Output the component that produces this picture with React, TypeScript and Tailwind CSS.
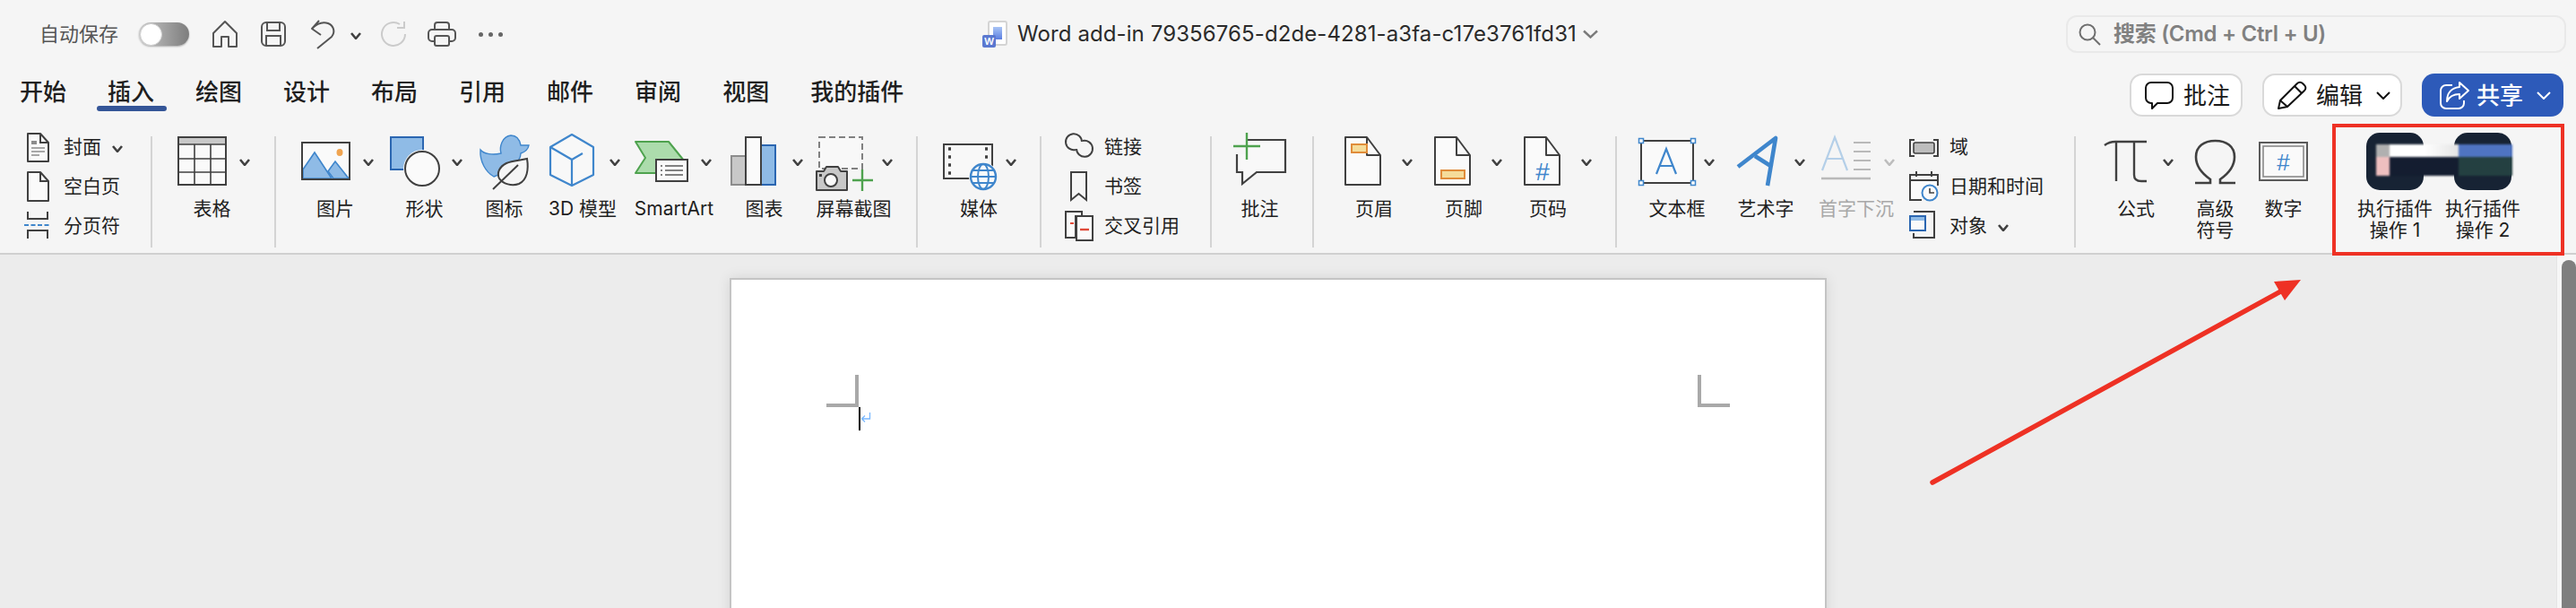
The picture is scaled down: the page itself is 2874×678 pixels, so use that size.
import React from 'react';

const INK = '#404040';
const BLUE = '#2b66b1';
const SKY = '#8fbbe6';
const MID = '#3f86cc';

type SvgProps = { w: number; h: number; children: React.ReactNode };

const Svg = ({ w, h, children }: SvgProps) => (
  <svg width={w} height={h} viewBox={`0 0 ${w} ${h}`} fill="none" className="shrink-0 overflow-visible">
    {children}
  </svg>
);

const Chevron = ({ color = '#404040' }: { color?: string }) => (
  <svg width="12" height="8" viewBox="0 0 12 8" fill="none" className="shrink-0 mt-[3px]">
    <path d="M1 1l5 6 5-6" stroke={color} strokeWidth="2.6" strokeLinejoin="round" />
  </svg>
);

/* ---------- big ribbon icons, 55px tall box starting at y=152 ---------- */
const TableIcon = () => (
  <Svg w={55} h={55}>
    <rect x="1" y="1" width="53" height="53" fill="#fafafa" />
    <rect x="1" y="1" width="53" height="8" fill="#c8c8c8" />
    <path d="M1 9h53M1 25h53M1 40h53M19 9v45M37 9v45" stroke={INK} strokeWidth="1.6" />
    <rect x="1" y="1" width="53" height="53" stroke={INK} strokeWidth="2" />
  </Svg>
);

const PictureIcon = () => (
  <Svg w={55} h={55}>
    <rect x="1" y="7" width="53" height="41" fill="#fafafa" />
    <path d="M2 37L15 18l19 29H2z" fill={SKY} stroke={MID} strokeWidth="1.6" />
    <path d="M30 39l8-11 15 19H36z" fill={SKY} stroke={MID} strokeWidth="1.6" />
    <ellipse cx="43" cy="18" rx="3.5" ry="4" fill="#f0a450" />
    <rect x="1" y="7" width="53" height="41" stroke={INK} strokeWidth="2" />
  </Svg>
);

const ShapeIcon = () => (
  <Svg w={56} h={55}>
    <rect x="1" y="1" width="36" height="36" fill={SKY} stroke={BLUE} strokeWidth="2" />
    <ellipse cx="36" cy="36" rx="21" ry="21" fill="#f5f5f5" />
    <ellipse cx="36" cy="36" rx="19" ry="19" fill="#fafafa" stroke={INK} strokeWidth="2" />
  </Svg>
);

const IconsIcon = () => (
  <Svg w={55} h={55}>
    <path
      d="M1 15C5 20 15 21 24 19 22 12 25 0 35-1 43-1 45 5 46 10L55 10C54 16 49 18 46 19 46 30 30 40 16 45 7 40 0 28 1 15Z"
      fill={SKY}
      stroke={MID}
      strokeWidth="1.4"
    />
    <path d="M53 25c2 12 0 24-9 28-8 3-18 0-22-6-3-6 0-13 8-17 7-3 15-3 23-5z" fill="#f5f5f5" stroke={INK} strokeWidth="2" />
    <path d="M15 59L43 32" stroke={INK} strokeWidth="2" />
  </Svg>
);

const CubeIcon = () => (
  <Svg w={50} h={55}>
    <path d="M25-2L49 12v31L25 55 1 43V12z" fill="#f8f8f8" stroke={MID} strokeWidth="2.2" strokeLinejoin="round" />
    <path d="M1 12l24 14v29M25 26l12-7" stroke={MID} strokeWidth="2.2" />
  </Svg>
);

const SmartArtIcon = () => (
  <Svg w={58} h={55}>
    <path d="M0 6h37l17 21-13 14H0l11-17z" fill="#acdcac" stroke="#4ea24e" strokeWidth="2" strokeLinejoin="round" />
    <rect x="23" y="26" width="35" height="24" fill="#fafafa" stroke={INK} strokeWidth="2" />
    <path d="M28 33h2M33 33h20M28 38h2M33 38h20M28 43h2M33 43h20" stroke="#5a5a5a" strokeWidth="1.6" />
  </Svg>
);

const ChartIcon = () => (
  <Svg w={51} h={55}>
    <rect x="1" y="22" width="17" height="32" fill="#c8c8c8" stroke="#8c8c8c" strokeWidth="2" />
    <rect x="34" y="10" width="16" height="44" fill={SKY} stroke={BLUE} strokeWidth="2" />
    <rect x="17" y="1" width="17" height="53" fill="#fafafa" stroke={INK} strokeWidth="2" />
  </Svg>
);

const ScreenshotIcon = () => (
  <Svg w={65} h={55}>
    <rect x="4" y="1" width="48" height="35" fill="#f8f8f8" stroke="#808080" strokeWidth="2" strokeDasharray="7 4" />
    <path d="M1 39h8l3-5h13l3 5h7v21H1z" fill="#c8c8c8" stroke={INK} strokeWidth="2" strokeLinejoin="round" />
    <ellipse cx="17" cy="49" rx="7" ry="7" fill="#fafafa" stroke={INK} strokeWidth="2" />
    <rect x="4" y="42" width="3" height="3" fill={INK} />
    <path d="M41 49h23M52 37v24" stroke="#4ea24e" strokeWidth="2.4" />
  </Svg>
);

const MediaIcon = () => (
  <Svg w={60} h={55}>
    <rect x="1" y="9" width="54" height="38" fill="#f8f8f8" stroke={INK} strokeWidth="2" />
    <path d="M6 14h3M6 23h3M6 32h3M6 41h3M47 14h3M47 23h3" stroke={INK} strokeWidth="3.4" />
    <circle cx="45" cy="45" r="16" fill="#f5f5f5" />
    <ellipse cx="45" cy="45" rx="14" ry="14" fill="#fafafa" stroke={MID} strokeWidth="2.4" />
    <ellipse cx="45" cy="45" rx="6" ry="14" stroke={MID} strokeWidth="2" />
    <path d="M31 45h28M33 38h24M33 52h24" stroke={MID} strokeWidth="2" />
  </Svg>
);

const CommentAddIcon = () => (
  <Svg w={59} h={55}>
    <path d="M4 4h54v36H26L10 53V40H4z" fill="#f8f8f8" stroke={INK} strokeWidth="2.2" />
    <rect x="0" y="2" width="15" height="18" fill="#f5f5f5" />
    <path d="M0 11h30M15-4v30" stroke="#4ea24e" strokeWidth="2.4" />
  </Svg>
);

const PageIcon = ({ children }: { children?: React.ReactNode }) => (
  <Svg w={41} h={55}>
    <path d="M1 1h24l15 20v33H1z" fill="#fafafa" stroke={INK} strokeWidth="2" strokeLinejoin="round" />
    <path d="M25 1v20h15" stroke={INK} strokeWidth="2" strokeLinejoin="round" />
    {children}
  </Svg>
);

const TextBoxIcon = () => (
  <Svg w={62} h={55}>
    <rect x="2" y="5" width="58" height="47" fill="#fafafa" stroke={INK} strokeWidth="2" />
    <path d="M19 42L30 14l11 28M23 33h15" stroke={MID} strokeWidth="2.2" />
    {[[2, 5], [60, 5], [2, 52], [60, 52]].map(([x, y]) => (
      <rect key={`${x}-${y}`} x={x - 2.5} y={y - 2.5} width="5" height="5" fill="#fafafa" stroke={MID} strokeWidth="1.5" />
    ))}
  </Svg>
);

const WordArtIcon = () => (
  <Svg w={45} h={55}>
    <path d="M1 34L43 2 34 55" stroke={MID} strokeWidth="4.6" strokeLinejoin="round" />
    <path d="M20 22l19 12" stroke={MID} strokeWidth="4.6" />
  </Svg>
);

const DropCapIcon = () => (
  <Svg w={55} h={55}>
    <path d="M1 38L15 1l14 37M6 25h18" stroke="#b4cfe8" strokeWidth="2.2" />
    <path d="M36 7h19M36 17h19M36 27h19M36 37h19" stroke="#b9b9b9" strokeWidth="2" />
    <path d="M0 47h55" stroke="#b9b9b9" strokeWidth="2.4" />
  </Svg>
);

const PiIcon = () => (
  <Svg w={48} h={55}>
    <path d="M0 10c4-3 7-4 12-4h35" stroke={INK} strokeWidth="2.4" />
    <path d="M13 6v44" stroke={INK} strokeWidth="2.4" />
    <path d="M33 6v37c0 5 3 7 8 7h6" stroke={INK} strokeWidth="2.4" />
  </Svg>
);

const OmegaIcon = () => (
  <Svg w={47} h={55}>
    <path
      d="M1 52h17v-4C8 41 2 32 2 23 2 11 11 5 23.500 5S45 11 45 23c0 9-6 18-16 25v4h17"
      stroke={INK}
      strokeWidth="2.6"
    />
  </Svg>
);

const NumberIcon = () => (
  <Svg w={55} h={55}>
    <rect x="1" y="7" width="53" height="42" fill="#fafafa" stroke="#5a5a5a" strokeWidth="2" />
    <rect x="5" y="11" width="45" height="34" stroke="#8a8a8a" strokeWidth="1.6" />
    <text x="27.500" y="38" textAnchor="middle" fontSize="26" fontFamily="Liberation Sans" fill={MID}>#</text>
  </Svg>
);

/* ---------- plugin tile ---------- */
const PluginTile = () => <div className="w-[64px] h-[64px] rounded-[15px] bg-[#172334] shrink-0" />;

/* ---------- one big ribbon button ---------- */
type BigProps = {
  className: string;
  icon: React.ReactNode;
  label: React.ReactNode;
  gap?: string;
  chevron?: boolean;
  labelClass?: string;
  muted?: boolean;
};

const Big = ({ className, icon, label, gap = '', chevron, labelClass = '', muted }: BigProps) => (
  <div className={`${className} shrink-0 flex flex-col items-center pt-[10px]`}>
    <div className={`h-[55px] w-full flex items-center ${gap}`}>
      {icon}
      {chevron && <Chevron color={muted ? '#bcbcbc' : '#404040'} />}
    </div>
    <div className={`mt-[14px] text-[21px] leading-[24px] text-center whitespace-nowrap ${muted ? 'text-[#a8a8a8]' : 'text-[#1f1f1f]'} ${labelClass}`}>
      {label}
    </div>
  </div>
);

const Divider = ({ className }: { className: string }) => (
  <div className={`${className} shrink-0 w-[2px] h-[124px] mt-[10px] bg-[#d4d4d4]`} />
);

const SmallRow = ({ icon, slot, label, chevron }: { icon: React.ReactNode; slot: string; label: string; chevron?: boolean }) => (
  <div className="h-[44px] flex items-center text-[21px] text-[#1f1f1f] whitespace-nowrap">
    <div className={`${slot} h-[44px] shrink-0`}>{icon}</div>
    <span>{label}</span>
    {chevron && (
      <span className="ml-[12px] flex">
        <Chevron />
      </span>
    )}
  </div>
);

const tabs = ['开始', '插入', '绘图', '设计', '布局', '引用', '邮件', '审阅', '视图', '我的插件'];

export default function App() {
  return (
    <div className="relative w-[2874px] h-[678px] overflow-hidden flex flex-col bg-[#f5f5f5] font-['Inter','Noto_Sans_CJK_SC',sans-serif]">
      {/* Title bar */}
      <div className="h-[76px] flex items-center shrink-0">
        <div className="w-[1096px] pl-[44px] flex items-center shrink-0">
          <span className="text-[22px] text-[#555555] whitespace-nowrap">自动保存</span>
          <div className="ml-[23px] w-[56px] h-[26px] rounded-full bg-gradient-to-r from-[#c9c9c9] to-[#7d7d7d] shadow-[0_1px_2px_rgba(0,0,0,0.3)] flex items-center pl-[1px]">
            <div className="w-[25px] h-[25px] rounded-full bg-white border border-[#cfcfcf]" />
          </div>
          <div className="ml-[25px] flex">
            <Svg w={30} h={30}>
              <path d="M2 14L15 1l13 13v15h-9V18h-8v11H2z" stroke="#555" strokeWidth="2" strokeLinejoin="round" />
            </Svg>
          </div>
          <div className="ml-[25px] flex">
            <Svg w={28} h={28}>
              <rect x="1" y="1" width="26" height="26" rx="5" stroke="#555" strokeWidth="2" />
              <path d="M7 1v9h14V1M6 27V16h16v11" stroke="#555" strokeWidth="2" />
            </Svg>
          </div>
          <div className="ml-[27px] flex">
            <Svg w={27} h={32}>
              <path d="M10 1L2 10l10 7M2 10c6-6 12-8 18-6 7 3 8 10 4 15L8 32" stroke="#555" strokeWidth="2" strokeLinejoin="round" />
            </Svg>
          </div>
          <div className="ml-[18px] flex">
            <Chevron color="#404040" />
          </div>
          <div className="ml-[22px] flex">
            <Svg w={28} h={28}>
              <path d="M21 3A13 13 0 1 0 27 14" stroke="#cbcbcb" strokeWidth="2" />
              <path d="M26 0v7h-8" stroke="#cbcbcb" strokeWidth="2" />
            </Svg>
          </div>
          <div className="ml-[24px] flex">
            <Svg w={32} h={28}>
              <path d="M8 9V4a3 3 0 0 1 3-3h10a3 3 0 0 1 3 3v5" stroke="#555" strokeWidth="2" />
              <path d="M8 22H5a4 4 0 0 1-4-4v-5a4 4 0 0 1 4-4h22a4 4 0 0 1 4 4v5a4 4 0 0 1-4 4h-3" stroke="#555" strokeWidth="2" />
              <rect x="8" y="16" width="16" height="11" rx="2" stroke="#555" strokeWidth="2" />
            </Svg>
          </div>
          <div className="ml-[25px] flex gap-[6px]">
            <div className="w-[5px] h-[5px] rounded-full bg-[#666666]" />
            <div className="w-[5px] h-[5px] rounded-full bg-[#666666]" />
            <div className="w-[5px] h-[5px] rounded-full bg-[#666666]" />
          </div>
        </div>
        <div className="flex items-center shrink-0">
          <div className="relative w-[28px] h-[30px]">
            <div className="absolute right-0 top-0 w-[22px] h-[28px] rounded-[3px] bg-white border-2 border-[#d4d4d4] flex justify-center pt-[5px]">
              <div className="w-[10px] h-[14px] bg-gradient-to-b from-[#a9c4f5] to-[#5c7de0]" />
            </div>
            <div className="absolute left-0 bottom-0 w-[15px] h-[14px] rounded-[2px] bg-[#5a78d0] text-white text-[11px] leading-[14px] text-center font-semibold">W</div>
          </div>
          <span className="ml-[11px] text-[24px] leading-[30px] tracking-[0.1px] text-[#2b2b2b] whitespace-nowrap">Word add-in 79356765-d2de-4281-a3fa-c17e3761fd31</span>
          <svg width="17" height="10" viewBox="0 0 17 10" fill="none" className="ml-[7px]">
            <path d="M1 1.500l7.500 7 7.500-7" stroke="#7a7a7a" strokeWidth="2.400" />
          </svg>
        </div>
        <div className="ml-auto mr-[11px] w-[558px] h-[42px] rounded-[12px] border-2 border-[#e9e9e9] flex items-center pl-[12px] text-[24px] font-semibold tracking-[-0.3px] text-[#808080] whitespace-nowrap">
          <svg width="25" height="25" viewBox="0 0 25 25" fill="none" className="shrink-0">
            <circle cx="10" cy="10" r="8.500" stroke="#6f6f6f" strokeWidth="2" />
            <path d="M16 16l8 8" stroke="#6f6f6f" strokeWidth="2" />
          </svg>
          <span className="ml-[14px]">搜索 (Cmd + Ctrl + U)</span>
        </div>
      </div>

      {/* Tabs row */}
      <div className="h-[60px] flex items-center shrink-0">
        <div className="flex gap-[46px] pl-[22px] -mt-[6px]">
          {tabs.map((t) => (
            <div key={t} className="relative text-[26px] leading-[34px] font-medium text-[#1f1f1f] whitespace-nowrap">
              {t}
              {t === '插入' && <div className="absolute left-[-12px] right-[-14px] top-[32px] h-[6px] rounded-full bg-[#345597]" />}
            </div>
          ))}
        </div>
        <div className="ml-auto mr-[14px] flex gap-[22px] text-[26px] text-[#1a1a1a]">
          <div className="w-[126px] h-[48px] rounded-[14px] bg-white border-2 border-[#d9d9d9] flex items-center pl-[15px]">
            <Svg w={32} h={30}>
              <path d="M7 1h18a6 6 0 0 1 6 6v11a6 6 0 0 1-6 6H14l-6 6v-6H7a6 6 0 0 1-6-6V7a6 6 0 0 1 6-6z" stroke="#111" strokeWidth="2" strokeLinejoin="round" />
            </Svg>
            <span className="ml-[11px]">批注</span>
          </div>
          <div className="w-[156px] h-[48px] rounded-[14px] bg-white border-2 border-[#d9d9d9] flex items-center pl-[15px]">
            <Svg w={32} h={31}>
              <path d="M1 30l2-9L22 2a4 4 0 0 1 6 0l2 2a4 4 0 0 1 0 6L11 28z" stroke="#111" strokeWidth="2" strokeLinejoin="round" />
              <path d="M19 5l8 8M3 21l8 7" stroke="#111" strokeWidth="2" />
            </Svg>
            <span className="ml-[11px]">编辑</span>
            <svg width="16" height="9" viewBox="0 0 16 9" fill="none" className="ml-[15px]">
              <path d="M1 1l7 7 7-7" stroke="#111" strokeWidth="2" />
            </svg>
          </div>
          <div className="w-[158px] h-[48px] rounded-[14px] bg-[#2d5ab9] flex items-center pl-[20px] font-medium text-white">
            <Svg w={32} h={31}>
              <path d="M14 4H7a6 6 0 0 0-6 6v14a6 6 0 0 0 6 6h14a6 6 0 0 0 6-6v-3" stroke="#fff" strokeWidth="2" />
              <path d="M22 1l10 9-10 9v-5c-7 0-11 2-14 8 0-9 5-15 14-16z" stroke="#fff" strokeWidth="2" strokeLinejoin="round" />
            </Svg>
            <span className="ml-[9px]">共享</span>
            <svg width="16" height="9" viewBox="0 0 16 9" fill="none" className="ml-[15px]">
              <path d="M1 1l7 7 7-7" stroke="#fff" strokeWidth="2" />
            </svg>
          </div>
        </div>
      </div>

      {/* Ribbon */}
      <div className="h-[148px] shrink-0 flex items-start pt-[6px] border-b-2 border-[#d0d0d0]">
        <div className="ml-[26px] w-[142px] shrink-0">
          <SmallRow
            slot="w-[45px]"
            label="封面"
            chevron
            icon={
              <Svg w={45} h={44}>
                <path d="M5 7h14l9 10v21H5z" fill="#fafafa" stroke={INK} strokeWidth="2" strokeLinejoin="round" />
                <path d="M19 7v10h9" stroke={INK} strokeWidth="2" />
                <rect x="9" y="15" width="6" height="4" fill="#8c8c8c" />
                <path d="M9 23h15M9 27h15M9 31h9" stroke="#8c8c8c" strokeWidth="1.6" />
              </Svg>
            }
          />
          <SmallRow
            slot="w-[45px]"
            label="空白页"
            icon={
              <Svg w={45} h={44}>
                <path d="M5 6h14l9 10v22H5z" fill="#fafafa" stroke={INK} strokeWidth="2" strokeLinejoin="round" />
                <path d="M19 6v10h9" stroke={INK} strokeWidth="2" />
              </Svg>
            }
          />
          <SmallRow
            slot="w-[45px]"
            label="分页符"
            icon={
              <Svg w={45} h={44}>
                <path d="M5 6v8h22V6" stroke={INK} strokeWidth="2" />
                <path d="M1 21h30" stroke={MID} strokeWidth="2" strokeDasharray="5 2.500" />
                <path d="M5 36v-9h22v9" stroke={INK} strokeWidth="2" />
              </Svg>
            }
          />
        </div>
        <Divider className="" />

        <Big className="ml-[28px] w-[81px]" gap="gap-[14px]" chevron labelClass="pr-[4px]" icon={<TableIcon />} label="表格" />
        <Divider className="ml-[27px]" />

        <Big className="ml-[28px] w-[81px]" gap="gap-[14px]" chevron labelClass="pr-[5px]" icon={<PictureIcon />} label="图片" />
        <Big className="ml-[18px] w-[81px]" gap="gap-[13px]" chevron labelClass="pr-[4px]" icon={<ShapeIcon />} label="形状" />
        <Big className="ml-[19px] w-[55px]" icon={<IconsIcon />} label="图标" />
        <Big className="ml-[23px] w-[79px]" gap="gap-[17px]" chevron labelClass="pr-[5px]" icon={<CubeIcon />} label="3D 模型" />
        <Big className="ml-[17px] w-[84px]" gap="gap-[15px]" chevron labelClass="pl-[2px]" icon={<SmartArtIcon />} label="SmartArt" />
        <Big className="ml-[22px] w-[81px]" gap="gap-[18px]" chevron labelClass="pr-[6px]" icon={<ChartIcon />} label="图表" />
        <Big className="ml-[14px] w-[86px]" gap="gap-[9px]" chevron labelClass="pr-[1px]" icon={<ScreenshotIcon />} label="屏幕截图" />
        <Divider className="ml-[26px]" />

        <Big className="ml-[28px] w-[82px]" gap="gap-[10px]" chevron labelClass="pr-[2px]" icon={<MediaIcon />} label="媒体" />
        <Divider className="ml-[26px]" />

        <div className="ml-[26px] w-[162px] shrink-0">
          <SmallRow
            slot="w-[44px]"
            label="链接"
            icon={
              <Svg w={44} h={44}>
                <path d="M12 25A9 9 0 1 1 19 16" stroke={INK} strokeWidth="2" />
                <path d="M20 15A9 9 0 1 1 13 24" stroke={INK} strokeWidth="2" />
              </Svg>
            }
          />
          <SmallRow
            slot="w-[44px]"
            label="书签"
            icon={
              <Svg w={44} h={44}>
                <path d="M7 6h17v31l-8.500-7L7 37z" stroke={INK} strokeWidth="2" strokeLinejoin="miter" />
              </Svg>
            }
          />
          <SmallRow
            slot="w-[44px]"
            label="交叉引用"
            icon={
              <Svg w={44} h={44}>
                <path d="M1 6h18v5H12v24H1z" fill="#fafafa" stroke={INK} strokeWidth="2" />
                <rect x="13" y="11" width="18" height="27" fill="#fafafa" stroke={INK} strokeWidth="2" />
                <path d="M6 19h4" stroke="#e04b3a" strokeWidth="2" />
                <path d="M17 26h10" stroke="#e04b3a" strokeWidth="2.400" />
              </Svg>
            }
          />
        </div>
        <Divider className="" />

        <Big className="ml-[24px] w-[59px]" icon={<CommentAddIcon />} label="批注" />
        <Divider className="ml-[29px]" />

        <Big
          className="ml-[34px] w-[76px]"
          gap="gap-[23px]"
          chevron
          labelClass="pr-[10px]"
          icon={
            <PageIcon>
              <rect x="8" y="9" width="17" height="9" fill="#f5dc9a" stroke="#e08c3a" strokeWidth="2" />
            </PageIcon>
          }
          label="页眉"
        />
        <Big
          className="ml-[24px] w-[76px]"
          gap="gap-[23px]"
          chevron
          labelClass="pr-[10px]"
          icon={
            <PageIcon>
              <rect x="8" y="38" width="26" height="9" fill="#f5dc9a" stroke="#e08c3a" strokeWidth="2" />
            </PageIcon>
          }
          label="页脚"
        />
        <Big
          className="ml-[24px] w-[76px]"
          gap="gap-[23px]"
          chevron
          labelClass="pr-[22px]"
          icon={
            <PageIcon>
              <text x="21" y="49" textAnchor="middle" fontSize="28" fontFamily="Liberation Sans" fill={MID}>#</text>
            </PageIcon>
          }
          label="页码"
        />
        <Divider className="ml-[26px]" />

        <Big className="ml-[25px] w-[84px]" gap="gap-[10px]" chevron icon={<TextBoxIcon />} label="文本框" />
        <Big className="ml-[25px] w-[76px]" gap="gap-[19px]" chevron labelClass="pr-[12px]" icon={<WordArtIcon />} label="艺术字" />
        <Big className="ml-[18px] w-[82px]" gap="gap-[15px]" chevron muted labelClass="pr-[4px]" icon={<DropCapIcon />} label="首字下沉" />

        <div className="ml-[16px] w-[184px] shrink-0">
          <SmallRow
            slot="w-[45px]"
            label="域"
            icon={
              <Svg w={45} h={44}>
                <path d="M6 14H1v18h5M27 14h5v18h-5" stroke={INK} strokeWidth="2" />
                <rect x="5" y="17" width="23" height="12" rx="2" fill="#bdbdbd" stroke={INK} strokeWidth="1.600" />
              </Svg>
            }
          />
          <SmallRow
            slot="w-[45px]"
            label="日期和时间"
            icon={
              <Svg w={45} h={44}>
                <path d="M14 37H1V9h31v12" fill="#fafafa" stroke={INK} strokeWidth="2" />
                <path d="M1 15h31M8 5v6M25 5v6" stroke={INK} strokeWidth="2" />
                <circle cx="23" cy="29" r="8.500" fill="#fafafa" stroke={MID} strokeWidth="2" />
                <path d="M23 24v5h5" stroke={INK} strokeWidth="1.600" />
              </Svg>
            }
          />
          <SmallRow
            slot="w-[45px]"
            label="对象"
            chevron
            icon={
              <Svg w={45} h={44}>
                <path d="M5 6h23v29H5v-5" stroke={INK} strokeWidth="2" />
                <rect x="1" y="11" width="17" height="16" fill="#fafafa" stroke={BLUE} strokeWidth="2" />
                <rect x="2" y="12" width="15" height="4" fill={SKY} />
              </Svg>
            }
          />
        </div>
        <Divider className="" />

        <Big className="ml-[32px] w-[77px]" gap="gap-[17px]" chevron labelClass="pr-[7px]" icon={<PiIcon />} label="公式" />
        <Big className="ml-[23px] w-[47px]" icon={<OmegaIcon />} label={<>高级<br />符号</>} />
        <Big className="ml-[25px] w-[55px]" icon={<NumberIcon />} label="数字" />

        <div className="relative flex ml-[65px] shrink-0">
          <Big className="w-[64px]" icon={<PluginTile />} label={<>执行插件<br />操作 1</>} />
          <Big className="ml-[34px] w-[64px]" icon={<PluginTile />} label={<>执行插件<br />操作 2</>} />
          {/* blurred patch lying over both tiles */}
          <div className="absolute left-[11px] top-[19px] w-[152px] h-[35px] grid grid-cols-[15px_77px_60px] grid-rows-[14px_21px] blur-[0.8px]">
            <div className="bg-[#b0b0b0]" />
            <div className="bg-gradient-to-r from-white via-white to-[#e4e4e4]" />
            <div className="bg-[#4f74c2]" />
            <div className="bg-[#eebfbf]" />
            <div className="bg-[#141d30]" />
            <div className="bg-[#244041]" />
          </div>
        </div>
      </div>

      {/* Document canvas */}
      <div className="flex-1 flex min-h-0">
        <div className="flex-1 flex justify-center pt-[26px] bg-[#ececec]">
          <div className="w-[1224px] h-[500px] bg-white border-2 border-[#c4c4c4] shadow-[0_0_14px_rgba(0,0,0,0.1)] flex justify-between px-[106px] pt-[106px]">
            <div className="w-[36px]">
              <div className="w-[36px] h-[36px] border-r-4 border-b-4 border-[#a9a9a9]" />
              <div className="relative ml-[36px] w-[2px] h-[26px] bg-black">
                <svg width="12" height="12" viewBox="0 0 12 12" fill="none" className="absolute left-[2px] top-[6px]">
                  <path d="M10.500 0v7H1.500M5 3.500L1.500 7 5 10.500" stroke="#7ab8ff" strokeWidth="1.300" />
                </svg>
              </div>
            </div>
            <div className="w-[36px] h-[36px] border-l-4 border-b-4 border-[#a9a9a9]" />
          </div>
        </div>
        <div className="w-[22px] bg-[#f7f7f7] border-l border-[#e4e4e4] flex justify-end pt-[6px]">
          <div className="w-[16px] h-[500px] rounded-full bg-[#7f7f7f]" />
        </div>
      </div>

      {/* Red annotation */}
      <div className="absolute left-[2602px] top-[138px] w-[259px] h-[147px] border-4 border-[#ee3124]" />
      <svg width="2874" height="678" viewBox="0 0 2874 678" fill="none" className="absolute inset-0 pointer-events-none">
        <path d="M2156 538L2550 322" stroke="#ee3124" strokeWidth="5.500" strokeLinecap="round" />
        <path d="M2567 312L2537 314l12 21z" fill="#ee3124" />
      </svg>
    </div>
  );
}
